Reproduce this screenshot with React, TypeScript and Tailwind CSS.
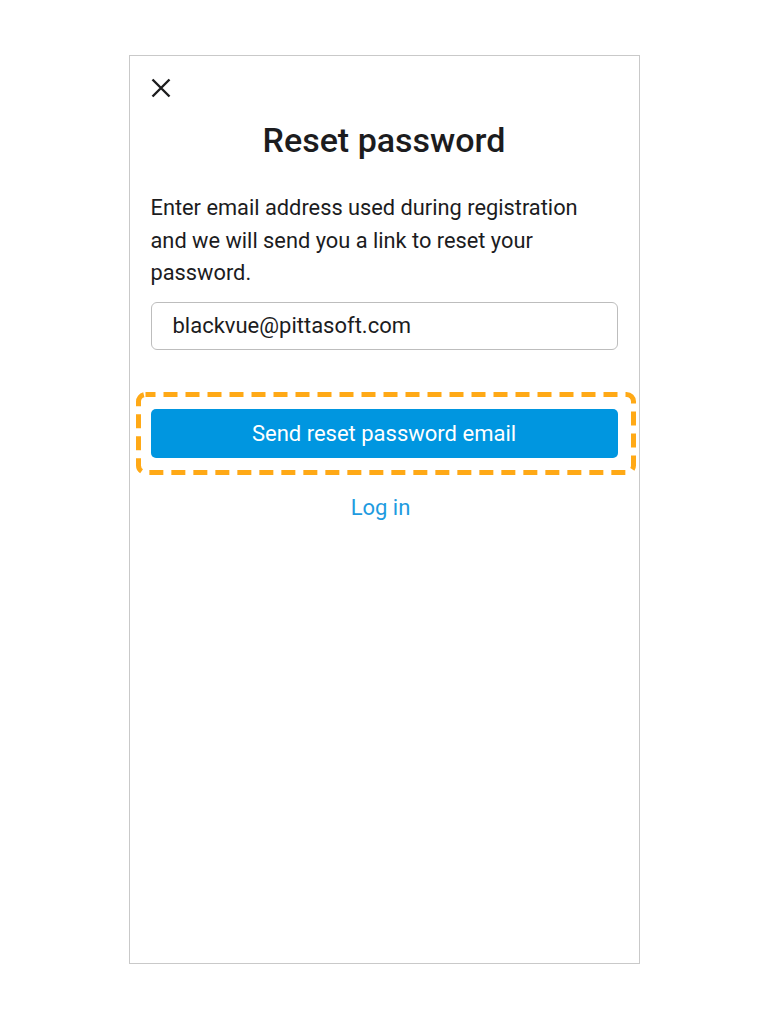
import React, { useState } from "react";

const CloseIcon = () => (
  <svg width="20" height="20" viewBox="0 0 20 20" fill="none">
    <path d="M1.5 1.5 L18.5 18.5 M18.5 1.5 L1.5 18.5" stroke="#1c1c1e" strokeWidth="2.4" strokeLinecap="butt" />
  </svg>
);

export default function App() {
  const [email, setEmail] = useState("blackvue@pittasoft.com");

  return (
    <div className="min-h-screen bg-white pt-[55px]" style={{ fontFamily: "Roboto, 'Liberation Sans', sans-serif" }}>
      <div className="mx-auto w-[511px] h-[909px] border border-[#c9c9c9] px-[21px]">
        {/* Close */}
        <div className="pt-[22px] h-[42px]">
          <button className="block">
            <CloseIcon />
          </button>
        </div>

        {/* Title */}
        <h1 className="mt-[22px] text-center text-[34px] leading-[40px] font-medium text-[#1c1c1e]">
          Reset password
        </h1>

        {/* Description */}
        <p className="mt-[32px] w-[440px] text-[21.8px] leading-[32.5px] text-[#1c1c1e]">
          Enter email address used during registration and we will send you a link to reset your password.
        </p>

        {/* Email input */}
        <input
          type="email"
          value={email}
          onChange={(e) => setEmail(e.target.value)}
          className="mt-[12px] block w-full h-[48px] rounded-[6px] border border-[#bdbdbd] px-[21px] text-[22px] text-[#1c1c1e] outline-none"
        />

        {/* Send button with highlight */}
        <div className="relative mt-[59px]">
          <button className="block w-full h-[49px] rounded-[5px] bg-[#0096e0] text-white text-[22px]">
            Send reset password email
          </button>
          <svg
            className="absolute left-[-15px] top-[-17px] pointer-events-none"
            width="500"
            height="83"
            viewBox="0 0 500 83"
            fill="none"
          >
            <rect
              x="2.5"
              y="2.5"
              width="495"
              height="78"
              rx="7"
              stroke="#ffa916"
              strokeWidth="5"
              strokeDasharray="14 8"
              strokeDashoffset="4"
            />
          </svg>
        </div>

        {/* Log in */}
        <div className="mt-[37px] pr-[7px] text-center">
          <a className="text-[22px] leading-[26px] text-[#1e9be0] cursor-pointer">Log in</a>
        </div>
      </div>
    </div>
  );
}
